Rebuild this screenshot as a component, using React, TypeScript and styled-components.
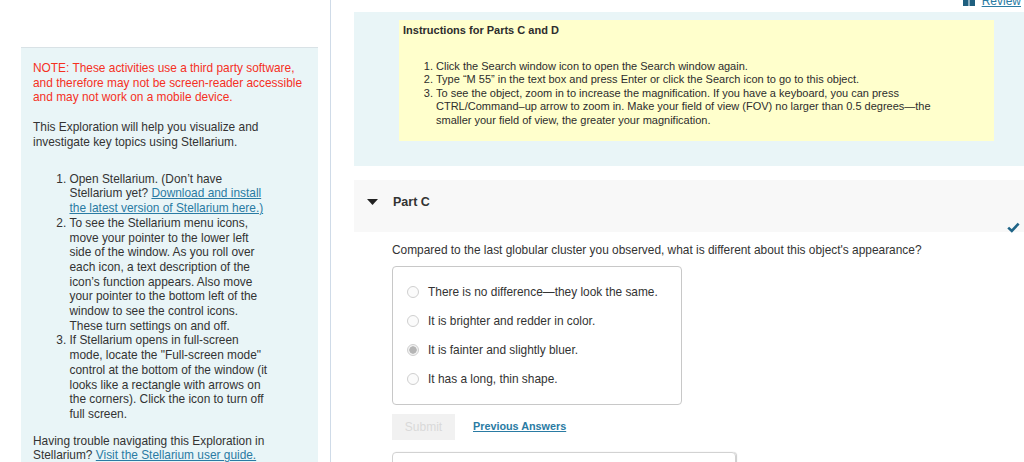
import { FC } from 'react';
import styled, { createGlobalStyle } from 'styled-components';

const GlobalStyle = createGlobalStyle`
  html, body {
    margin: 0;
    padding: 0;
    height: 462px;
    overflow: hidden;
    background: #ffffff;
  }
  body {
    font-family: 'Liberation Sans', Arial, sans-serif;
    color: #333333;
  }
`;

const options = [
  { label: 'There is no difference—they look the same.', checked: false },
  { label: 'It is brighter and redder in color.', checked: false },
  { label: 'It is fainter and slightly bluer.', checked: true },
  { label: 'It has a long, thin shape.', checked: false },
];

const App: FC = () => {
  return (
    <Page>
      <GlobalStyle />
      <Sidebar>
        <SidePanel>
          <Note>
            NOTE: These activities use a third party software, and therefore may not be screen-reader accessible and may
            not work on a mobile device.
          </Note>
          <SideText>This Exploration will help you visualize and investigate key topics using Stellarium.</SideText>
          <SideList>
            <li>
              Open Stellarium. (Don’t have Stellarium yet? <a href="#download">Download and install the latest version of Stellarium here.)</a>
            </li>
            <li>
              To see the Stellarium menu icons, move your pointer to the lower left side of the window. As you roll over
              each icon, a text description of the icon’s function appears. Also move your pointer to the bottom left of
              the window to see the control icons. These turn settings on and off.
            </li>
            <li>
              If Stellarium opens in full-screen mode, locate the "Full-screen mode" control at the bottom of the window
              (it looks like a rectangle with arrows on the corners). Click the icon to turn off full screen.
            </li>
          </SideList>
          <SideText>
            Having trouble navigating this Exploration in Stellarium? <a href="#guide">Visit the Stellarium user guide.</a>
          </SideText>
        </SidePanel>
      </Sidebar>
      <Main>
        <ReviewRow>
          <svg width="12" height="6" viewBox="0 0 12 6" aria-hidden="true">
            <path d="M0 0h5.5v6H0zM6.5 0H12v6H6.5z" fill="#1f5f7f" />
          </svg>
          <ReviewLink href="#review">Review</ReviewLink>
        </ReviewRow>
        <InstructionPanel>
          <YellowBox>
            <YellowTitle>Instructions for Parts C and D</YellowTitle>
            <YellowList>
              <li>Click the Search window icon to open the Search window again.</li>
              <li>Type “M 55” in the text box and press Enter or click the Search icon to go to this object.</li>
              <li>
                To see the object, zoom in to increase the magnification. If you have a keyboard, you can press
                CTRL/Command–up arrow to zoom in. Make your field of view (FOV) no larger than 0.5 degrees—the smaller
                your field of view, the greater your magnification.
              </li>
            </YellowList>
          </YellowBox>
        </InstructionPanel>
        <PartHeader>
          <svg width="11" height="6" viewBox="0 0 11 6" aria-hidden="true">
            <path d="M0 0h11L5.5 6z" fill="#222222" />
          </svg>
          <PartTitle>Part C</PartTitle>
          <CheckMark width="13" height="11" viewBox="0 0 13 11" aria-hidden="true">
            <path d="M1.2 5.6l3.6 3.4L11.6 1.6" fill="none" stroke="#1f6487" strokeWidth="2.6" />
          </CheckMark>
        </PartHeader>
        <PartBody>
          <Question>Compared to the last globular cluster you observed, what is different about this object's appearance?</Question>
          <OptionBox>
            {options.map((option) => (
              <OptionRow key={option.label}>
                <Radio $checked={option.checked} />
                <span>{option.label}</span>
              </OptionRow>
            ))}
          </OptionBox>
          <Actions>
            <SubmitButton type="button" disabled>
              Submit
            </SubmitButton>
            <PreviousLink href="#previous">Previous Answers</PreviousLink>
          </Actions>
          <FeedbackBox />
        </PartBody>
      </Main>
    </Page>
  );
};

export default App;

const Page = styled.div`
  display: flex;
  width: 1024px;
  height: 462px;
  overflow: hidden;
`;

const Sidebar = styled.aside`
  flex: 0 0 331px;
  box-sizing: border-box;
  padding: 47px 12px 0 21px;
  border-right: 1px solid #cfdbe8;
`;

const SidePanel = styled.div`
  box-sizing: border-box;
  height: 500px;
  padding: 13px 12px 0;
  background: #e9f5f7;
  border-top: 1px solid #d9e2e6;
  font-size: 11.9px;
  line-height: 14.7px;
  color: #333333;

  a {
    color: #2a7ba3;
    text-decoration: underline;
  }
`;

const Note = styled.p`
  margin: 0 0 14.7px;
  color: #f5301f;
`;

const SideText = styled.p`
  margin: 0;
`;

const SideList = styled.ol`
  margin: 22.5px 0 12px;
  padding: 0 34px 0 36.5px;
`;

const Main = styled.main`
  flex: 1;
  min-width: 0;
  padding-left: 23px;
`;

const ReviewRow = styled.div`
  display: flex;
  align-items: flex-end;
  justify-content: flex-end;
  gap: 7px;
  height: 8px;
  font-size: 12px;
  line-height: 14px;

  svg {
    flex: none;
    margin-bottom: 2px;
  }
`;

const ReviewLink = styled.a`
  color: #2a7ba3;
  text-decoration: underline;
  padding-right: 3px;
`;

const InstructionPanel = styled.section`
  box-sizing: border-box;
  height: 154px;
  margin-top: 4px;
  padding: 8px 30px 0 45px;
  background: #e9f5f7;
`;

const YellowBox = styled.div`
  box-sizing: border-box;
  height: 121px;
  padding: 4px 4px 0;
  background: #ffffcc;
  font-size: 11px;
  line-height: 13.5px;
  color: #2d2d2d;
`;

const YellowTitle = styled.div`
  font-weight: bold;
`;

const YellowList = styled.ol`
  margin: 22px 0 0;
  padding: 0 50px 0 33px;
`;

const PartHeader = styled.div`
  position: relative;
  display: flex;
  align-items: center;
  gap: 15px;
  box-sizing: border-box;
  height: 52px;
  margin-top: 14px;
  padding: 0 0 8px 13px;
  background: #f8f8f8;
`;

const PartTitle = styled.h2`
  margin: 0;
  font-size: 12.5px;
  font-weight: bold;
  color: #333333;
`;

const CheckMark = styled.svg`
  position: absolute;
  right: 4px;
  bottom: -1px;
`;

const PartBody = styled.div`
  padding: 11px 0 0 38px;
`;

const Question = styled.p`
  margin: 0;
  font-size: 11.9px;
  line-height: 14px;
  color: #333333;
`;

const OptionBox = styled.div`
  box-sizing: border-box;
  display: flex;
  flex-direction: column;
  gap: 14.5px;
  width: 290px;
  height: 139px;
  margin-top: 9px;
  padding: 18px 14px 0;
  border: 1px solid #c8c8c8;
  border-radius: 4px;
`;

const OptionRow = styled.label`
  display: flex;
  align-items: center;
  gap: 9px;
  height: 14.5px;
  font-size: 11.9px;
  line-height: 14.5px;
  color: #333333;
`;

const Radio = styled.span<{ $checked: boolean }>`
  box-sizing: border-box;
  flex: none;
  width: 12px;
  height: 12px;
  border: 1px solid #cfcfcf;
  border-radius: 50%;
  background: ${(props) => (props.$checked ? 'radial-gradient(circle, #b5b5b5 0 3.4px, #f2f2f2 4px)' : '#fbfbfb')};
`;

const Actions = styled.div`
  display: flex;
  align-items: center;
  gap: 18px;
  margin-top: 9px;
`;

const SubmitButton = styled.button`
  width: 63px;
  height: 26px;
  padding: 0;
  border: 0;
  background: #f1f1f1;
  color: #d9d9d9;
  font-family: inherit;
  font-size: 12px;
`;

const PreviousLink = styled.a`
  font-size: 10.8px;
  font-weight: bold;
  color: #2a7ba3;
  text-decoration: underline;
  margin-top: -2px;
`;

const FeedbackBox = styled.div`
  box-sizing: border-box;
  width: 344px;
  height: 40px;
  margin-top: 12px;
  border: 1px solid #d2d2d2;
  border-radius: 4px;
  box-shadow: 1px 0 1px #cccccc;
`;
